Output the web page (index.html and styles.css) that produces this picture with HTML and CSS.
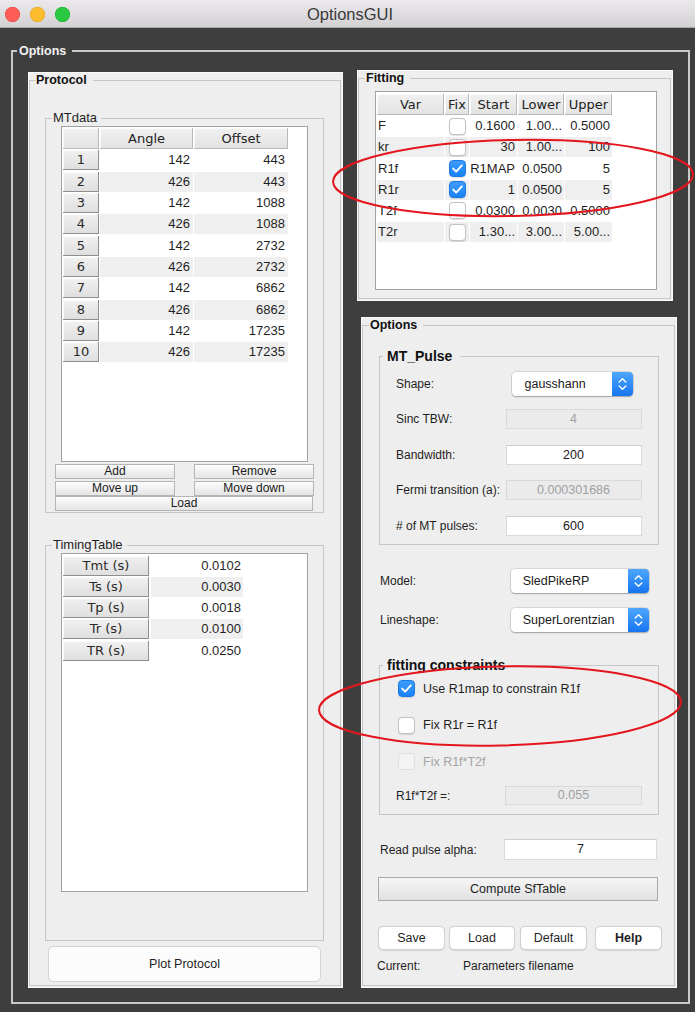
FILE: index.html
```html
<!DOCTYPE html>
<html>
<head>
<meta charset="utf-8">
<title>OptionsGUI</title>
<link rel="stylesheet" href="styles.css">
</head>
<body>
<div class="titlebar">
  <div class="lights"><span class="light red"></span><span class="light yellow"></span><span class="light green"></span></div>
  <div class="title">OptionsGUI</div>
  <div></div>
</div>

<fieldset class="frame">
  <legend class="frame-lg">Options</legend>
  <div class="frame-body">

    <div class="panel protocol">
      <fieldset class="etch">
        <legend class="lg">Protocol</legend>

        <fieldset class="sub mtdata">
          <legend class="slg">MTdata</legend>
          <div class="tbox mt-tbox">
            <div class="grid mt-grid">
              <div class="tr"><div class="th"></div><div class="th">Angle</div><div class="th">Offset</div></div>
              <div class="tr"><div class="rh">1</div><div class="td">142</div><div class="td">443</div></div>
              <div class="tr alt"><div class="rh">2</div><div class="td">426</div><div class="td">443</div></div>
              <div class="tr"><div class="rh">3</div><div class="td">142</div><div class="td">1088</div></div>
              <div class="tr alt"><div class="rh">4</div><div class="td">426</div><div class="td">1088</div></div>
              <div class="tr"><div class="rh">5</div><div class="td">142</div><div class="td">2732</div></div>
              <div class="tr alt"><div class="rh">6</div><div class="td">426</div><div class="td">2732</div></div>
              <div class="tr"><div class="rh">7</div><div class="td">142</div><div class="td">6862</div></div>
              <div class="tr alt"><div class="rh">8</div><div class="td">426</div><div class="td">6862</div></div>
              <div class="tr"><div class="rh">9</div><div class="td">142</div><div class="td">17235</div></div>
              <div class="tr alt"><div class="rh">10</div><div class="td">426</div><div class="td">17235</div></div>
            </div>
          </div>
          <div class="btns">
            <div class="sbtn">Add</div>
            <div class="sbtn">Remove</div>
            <div class="sbtn">Move up</div>
            <div class="sbtn">Move down</div>
          </div>
          <div class="sbtn load">Load</div>
        </fieldset>

        <fieldset class="sub timing">
          <legend class="slg">TimingTable</legend>
          <div class="tbox tm-tbox">
            <div class="grid tm-grid">
              <div class="tr"><div class="rh">Tmt (s)</div><div class="td">0.0102</div></div>
              <div class="tr alt"><div class="rh">Ts (s)</div><div class="td">0.0030</div></div>
              <div class="tr"><div class="rh">Tp (s)</div><div class="td">0.0018</div></div>
              <div class="tr alt"><div class="rh">Tr (s)</div><div class="td">0.0100</div></div>
              <div class="tr"><div class="rh">TR (s)</div><div class="td">0.0250</div></div>
            </div>
          </div>
        </fieldset>

        <div class="plot">Plot Protocol</div>
      </fieldset>
    </div>

    <div class="rcol">
      <div class="panel fitting">
        <fieldset class="etch">
          <legend class="lg">Fitting</legend>
          <div class="tbox fit-tbox">
            <div class="grid fit-grid">
              <div class="tr"><div class="th">Var</div><div class="th">Fix</div><div class="th">Start</div><div class="th">Lower</div><div class="th">Upper</div></div>
              <div class="tr"><div class="td l">F</div><div class="td c"><span class="cb"></span></div><div class="td">0.1600</div><div class="td">1.00...</div><div class="td">0.5000</div></div>
              <div class="tr alt"><div class="td l">kr</div><div class="td c"><span class="cb"></span></div><div class="td">30</div><div class="td">1.00...</div><div class="td">100</div></div>
              <div class="tr"><div class="td l">R1f</div><div class="td c"><span class="cb on"><svg width="11" height="9" viewBox="0 0 11 9"><path d="M1.2 4.6 L4.2 7.6 L9.8 1.4" fill="none" stroke="#fff" stroke-width="1.9" stroke-linecap="round" stroke-linejoin="round"/></svg></span></div><div class="td">R1MAP</div><div class="td">0.0500</div><div class="td">5</div></div>
              <div class="tr alt"><div class="td l">R1r</div><div class="td c"><span class="cb on"><svg width="11" height="9" viewBox="0 0 11 9"><path d="M1.2 4.6 L4.2 7.6 L9.8 1.4" fill="none" stroke="#fff" stroke-width="1.9" stroke-linecap="round" stroke-linejoin="round"/></svg></span></div><div class="td">1</div><div class="td">0.0500</div><div class="td">5</div></div>
              <div class="tr"><div class="td l">T2f</div><div class="td c"><span class="cb"></span></div><div class="td">0.0300</div><div class="td">0.0030</div><div class="td">0.5000</div></div>
              <div class="tr alt"><div class="td l">T2r</div><div class="td c"><span class="cb"></span></div><div class="td">1.30...</div><div class="td">3.00...</div><div class="td">5.00...</div></div>
            </div>
          </div>
        </fieldset>
      </div>

      <div class="panel opts">
        <fieldset class="etch">
          <legend class="lg">Options</legend>

          <fieldset class="grp pulse">
            <legend class="glg">MT_Pulse</legend>
            <div class="row r-shape">
              <span class="lbl">Shape:</span>
              <div class="popup shape"><span class="pv">gausshann</span><span class="step"><svg width="9" height="14" viewBox="0 0 9 14"><path d="M1.2 5 L4.5 1.7 L7.8 5 M1.2 9 L4.5 12.3 L7.8 9" fill="none" stroke="#fff" stroke-width="1.4" stroke-linecap="round" stroke-linejoin="round"/></svg></span></div>
            </div>
            <div class="row r-sinc"><span class="lbl">Sinc TBW:</span><div class="field dis">4</div></div>
            <div class="row r-bw"><span class="lbl">Bandwidth:</span><div class="field">200</div></div>
            <div class="row r-fermi"><span class="lbl">Fermi transition (a):</span><div class="field dis">0.000301686</div></div>
            <div class="row r-pulses"><span class="lbl"># of MT pulses:</span><div class="field">600</div></div>
          </fieldset>

          <div class="orow r-model">
            <span class="olbl">Model:</span>
            <div class="popup wide"><span class="pv">SledPikeRP</span><span class="step"><svg width="9" height="14" viewBox="0 0 9 14"><path d="M1.2 5 L4.5 1.7 L7.8 5 M1.2 9 L4.5 12.3 L7.8 9" fill="none" stroke="#fff" stroke-width="1.4" stroke-linecap="round" stroke-linejoin="round"/></svg></span></div>
          </div>
          <div class="orow r-line">
            <span class="olbl">Lineshape:</span>
            <div class="popup wide"><span class="pv">SuperLorentzian</span><span class="step"><svg width="9" height="14" viewBox="0 0 9 14"><path d="M1.2 5 L4.5 1.7 L7.8 5 M1.2 9 L4.5 12.3 L7.8 9" fill="none" stroke="#fff" stroke-width="1.4" stroke-linecap="round" stroke-linejoin="round"/></svg></span></div>
          </div>

          <fieldset class="grp cons">
            <legend class="glg">fitting constraints</legend>
            <div class="crow c1"><span class="cb on"><svg width="11" height="9" viewBox="0 0 11 9"><path d="M1.2 4.6 L4.2 7.6 L9.8 1.4" fill="none" stroke="#fff" stroke-width="1.9" stroke-linecap="round" stroke-linejoin="round"/></svg></span><span>Use R1map to constrain R1f</span></div>
            <div class="crow c2"><span class="cb"></span><span>Fix R1r = R1f</span></div>
            <div class="crow c3 dis"><span class="cb off"></span><span>Fix R1f*T2f</span></div>
            <div class="row r-rt"><span class="lbl">R1f*T2f =:</span><div class="field dis small">0.055</div></div>
          </fieldset>

          <div class="orow r-alpha">
            <span class="olbl alpha-l">Read pulse alpha:</span>
            <div class="field alpha">7</div>
          </div>

          <div class="compute">Compute SfTable</div>

          <div class="rbtns">
            <div class="rb save">Save</div>
            <div class="rb ld">Load</div>
            <div class="rb def">Default</div>
            <div class="rb help">Help</div>
          </div>

          <div class="current"><span class="cur-l">Current:</span><span>Parameters filename</span></div>
        </fieldset>
      </div>
    </div>

  </div>
</fieldset>

<svg class="marks" width="695" height="1012" viewBox="0 0 695 1012">
  <ellipse cx="513" cy="178" rx="180" ry="38" transform="rotate(-1.2 513 178)"/>
  <ellipse cx="500" cy="706" rx="181" ry="39.5" transform="rotate(-1.3 500 706)"/>
</svg>
</body>
</html>
```

FILE: styles.css
```css
* { box-sizing: border-box; }
html, body { margin: 0; padding: 0; }
body {
  width: 695px;
  height: 1012px;
  overflow: hidden;
  position: relative;
  background: #3e3e3e;
  font-family: "Liberation Sans", Arial, sans-serif;
  font-size: 12px;
  color: #1f1f1f;
}

/* title bar */
.titlebar {
  height: 28px;
  padding-top: 1px;
  background: linear-gradient(#ebe9eb, #d3d1d3);
  border-bottom: 1px solid #a9a7a9;
  display: grid;
  grid-template-columns: 1fr auto 1fr;
  align-items: center;
}
.lights { display: flex; gap: 10px; padding-left: 5px; }
.light { width: 15px; height: 15px; border-radius: 50%; }
.light.red { background: #fc5d57; box-shadow: inset 0 0 0 0.5px #e0443e; }
.light.yellow { background: #fdbb2e; box-shadow: inset 0 0 0 0.5px #dea123; }
.light.green { background: #2ac840; box-shadow: inset 0 0 0 0.5px #1aab29; }
.title { font-size: 16.5px; color: #3a3a3a; padding-left: 5px; }

/* outer frame */
.frame {
  margin: 15px 0 0 11px;
  width: 679px;
  min-width: 0;
  border: 2px solid #c9c9c9;
  padding: 11px 11px 14px 0;
}
.frame-lg {
  margin-left: 4px;
  padding: 0 6px 0 2px;
  color: #f3f3f3;
  font-weight: bold;
  font-size: 12.5px;
  line-height: 16px;
}
.frame-body { display: flex; gap: 14px; margin-left: 15px; }

/* panels */
.panel {
  background: #eeeeee;
  border: 1px solid #f9f9f9;
  padding: 0 1px 1px 0;
  width: 315px;
}
.protocol { margin-top: 2px; }
.rcol { width: 320px; display: flex; flex-direction: column; }
.fitting { width: 316px; }
.opts { width: 316px; margin: 16px 0 0 4px; }
.etch { margin: 0; padding: 0; min-width: 0; border: 1px solid #c6c6c6; }
.lg {
  margin-left: 6px;
  padding: 0 6px 0 1px;
  font-weight: bold;
  font-size: 12.5px;
  line-height: 14px;
  color: #111;
}
.protocol .lg { margin-left: 5px; }

/* sub groups */
.sub { margin: 0; padding: 0; min-width: 0; border: 1px solid #c6c6c6; width: 279px; }
.mtdata { margin: 24px 0 0 15px; padding-bottom: 1px; }
.timing { margin: 25px 0 0 15px; }
.slg { margin-left: 6px; padding: 0 4px 0 1px; font-size: 13px; line-height: 14px; color: #1f1f1f; }

/* tables */
.tbox { background: #fff; border: 1px solid #a2a2a2; }
.mt-tbox { margin: 1px 15px 0; height: 336px; padding: 1px; }
.tm-tbox { margin: 1px 15px 48px; height: 339px; padding: 1.5px 1px; }
.fit-tbox { margin: 6px 0 8px 16px; width: 282px; height: 199px; padding: 2px 1px; }
.grid { display: grid; align-content: start; }
.mt-grid {
  grid-template-columns: 36px 93px 94px;
  grid-template-rows: 21px;
  grid-auto-rows: 20px;
  column-gap: 1px;
  row-gap: 1.33px;
}
.tm-grid {
  grid-template-columns: 86px 92px;
  grid-auto-rows: 20px;
  column-gap: 2px;
  row-gap: 1.33px;
}
.fit-grid {
  grid-template-columns: 67px 24px 47px 46px 47px;
  grid-template-rows: 21px;
  grid-auto-rows: 20px;
  column-gap: 1px;
  row-gap: 1.2px;
}
.tr { display: contents; }
.th {
  background: linear-gradient(#f1f1f1, #e2e2e2);
  box-shadow: inset -1px -1px 0 #b9b9b9, inset 1px 1px 0 #fafafa;
  font-family: "DejaVu Sans", sans-serif;
  font-size: 13px;
  line-height: 21px;
  text-align: center;
  color: #222;
  white-space: nowrap;
  overflow: hidden;
}
.rh {
  background: linear-gradient(#f1f1f1, #dedede);
  box-shadow: inset -1px -1px 0 #8e8e8e, inset 1px 1px 0 #fbfbfb;
  font-family: "DejaVu Sans", sans-serif;
  font-size: 13px;
  line-height: 20px;
  text-align: center;
  color: #2a2a2a;
  white-space: nowrap;
}
.td {
  background: #fff;
  font-size: 13px;
  line-height: 20px;
  text-align: right;
  padding-right: 2px;
  white-space: nowrap;
  overflow: hidden;
  color: #1f1f1f;
}
.mt-grid .td { padding-right: 3px; }
.alt > .td { background: #efefef; }
.td.l { text-align: left; padding: 0 0 0 1px; }
.td.c { display: flex; align-items: center; justify-content: center; padding: 0; }

/* small buttons */
.btns {
  display: grid;
  grid-template-columns: 120px 120px;
  column-gap: 19px;
  row-gap: 2px;
  margin: 2px 9px 0;
}
.sbtn {
  height: 15px;
  border: 1px solid #b5b5b5;
  background: linear-gradient(#fcfcfc, #e5e5e5);
  font-size: 12px;
  line-height: 13px;
  text-align: center;
  color: #1a1a1a;
}
.load { margin: 0 9px; width: 258px; }

.plot {
  margin: 5px 0 3px 18px;
  width: 273px;
  height: 36px;
  border: 1px solid #d3d3d3;
  border-radius: 5px;
  background: #fcfcfc;
  display: flex;
  align-items: center;
  justify-content: center;
  font-size: 12.5px;
}

/* checkbox */
.cb {
  width: 17px;
  height: 17px;
  border-radius: 4px;
  background: #fff;
  border: 1px solid #c3c3c3;
  box-shadow: 0 0.5px 1px rgba(0, 0, 0, 0.12);
  display: inline-flex;
  align-items: center;
  justify-content: center;
  flex: none;
}
.cb.on { background: linear-gradient(#3d9cfb, #1983f6); border-color: #1a7be8; }
.cb.off { background: #f3f3f3; border-color: #dedede; box-shadow: none; }

/* option groups */
.grp { margin: 16px 0 0 16px; padding: 0; width: 280px; min-width: 0; border: 1px solid #c6c6c6; }
.glg {
  margin-left: 3px;
  padding: 0 8px 0 4px;
  font-weight: bold;
  font-size: 14px;
  line-height: 16px;
  color: #111;
}
.pulse { padding-bottom: 8px; }
.cons { margin-top: 25px; padding-bottom: 9px; }

.row { display: flex; align-items: center; padding-left: 16px; }
.lbl { width: 109.5px; flex: none; font-size: 12px; white-space: nowrap; }
.r-shape { margin-top: 8px; }
.r-sinc { margin-top: 13px; }
.r-bw { margin-top: 16px; }
.r-fermi { margin-top: 15px; }
.r-pulses { margin-top: 16px; }
.r-rt { margin-top: 16px; }
.r-rt .lbl { width: 109px; }

.field {
  width: 136px;
  height: 20px;
  background: #fff;
  border: 1px solid #dadada;
  border-top-color: #cdcdcd;
  text-align: center;
  font-size: 12.5px;
  line-height: 18px;
  color: #1a1a1a;
}
.field.dis { background: #ebebeb; color: #a0a0a0; border-color: #d9d9d9; }
.field.small { width: 137px; height: 19px; line-height: 17px; }
.field.alpha { width: 153px; height: 21px; line-height: 19px; }

.popup {
  display: flex;
  height: 24px;
  background: #fff;
  border-radius: 4px;
  box-shadow: 0 0 0 0.5px rgba(0, 0, 0, 0.18), 0 1px 1.5px rgba(0, 0, 0, 0.25);
}
.popup.shape { width: 121px; margin-left: 6px; }
.popup.wide { width: 138.3px; }
.pv { flex: 1; padding-left: 13px; line-height: 24px; font-size: 12.5px; color: #1a1a1a; white-space: nowrap; }
.popup.wide .pv { padding-left: 12px; }
.step {
  width: 21px;
  background: linear-gradient(#4ea7fd, #1775ef);
  border-radius: 0 4px 4px 0;
  display: flex;
  align-items: center;
  justify-content: center;
}

.orow { display: flex; align-items: center; padding-left: 17px; }
.olbl { width: 130.7px; flex: none; font-size: 12px; }
.r-model { margin-top: 24px; }
.r-line { margin-top: 15px; }
.r-alpha { margin-top: 24px; }
.olbl.alpha-l { width: 124px; }

.crow { display: flex; align-items: center; gap: 8px; margin-left: 18px; height: 17px; font-size: 12.5px; }
.c1 { margin-top: 7px; }
.c2, .c3 { margin-top: 19.5px; }
.crow.dis { color: #a5a5a5; }

.compute {
  margin: 17px 0 0 15px;
  width: 280px;
  height: 24px;
  border: 1px solid #a9a9a9;
  background: linear-gradient(#f6f6f6, #e1e1e1);
  font-size: 12.5px;
  display: flex;
  align-items: center;
  justify-content: center;
}

.rbtns { display: flex; margin: 25px 0 0 15px; }
.rb {
  height: 24px;
  border-radius: 5px;
  background: #fff;
  border: 1px solid #d0d0d0;
  box-shadow: 0 0.5px 1px rgba(0, 0, 0, 0.1);
  font-size: 12.5px;
  display: flex;
  align-items: center;
  justify-content: center;
  flex: none;
}
.save { width: 67px; }
.ld { width: 66px; margin-left: 4px; }
.def { width: 67px; margin-left: 5px; }
.help { width: 67px; margin-left: 8px; font-weight: bold; }

.current { display: flex; margin: 9px 0 12px 14px; line-height: 14px; font-size: 12px; }
.cur-l { width: 86px; }

/* annotation overlay */
.marks { position: absolute; left: 0; top: 0; pointer-events: none; }
.marks ellipse { fill: none; stroke: #e3161d; stroke-width: 2; }
```
